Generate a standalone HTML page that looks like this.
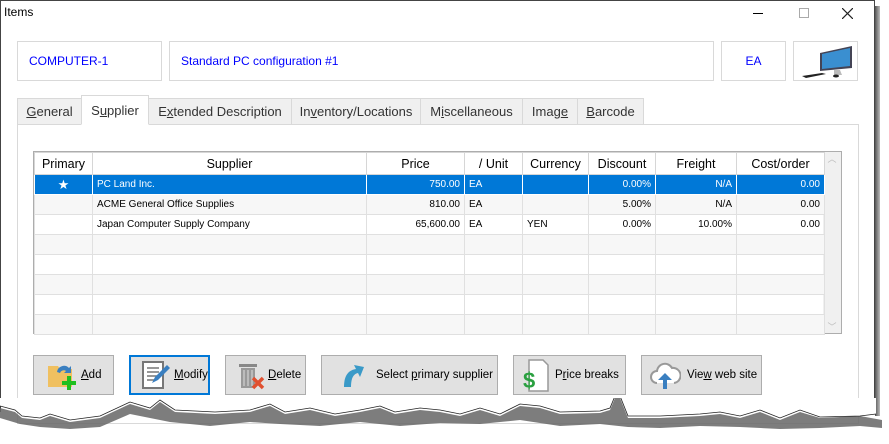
<!DOCTYPE html>
<html><head><style>
*{box-sizing:border-box;margin:0;padding:0}
body{width:889px;height:444px;background:#fff;position:relative;overflow:hidden;font-family:"Liberation Sans",Arial,sans-serif;font-size:12px;color:#000}
.a{position:absolute}
.box{position:absolute;border:1px solid #d9d9d9;background:#fff;color:#0000ff;font-size:12px;display:flex;align-items:center}
.tab{position:absolute;top:98px;height:27px;border:1px solid #d9d9d9;background:#f0f0f0;color:#333;font-size:13px;display:flex;align-items:center;justify-content:center}
table{border-collapse:collapse;position:absolute;left:33px;top:151px;table-layout:fixed}
td,th{height:20px;border:1px solid #e0e0e0;font-size:10px;padding:0 4px;white-space:nowrap;overflow:hidden}
th{font-weight:normal;font-size:12.5px;height:22px;border-color:#d6d6d6;background:#fff}
tr.sel td{background:#0078d7;color:#fff;border-color:#fff}
tr.g td{background:#f7f7f7}
.r{text-align:right}.c{text-align:center}
.btn{position:absolute;top:355px;height:40px;background:#e1e1e1;border:1px solid #adadad;font-size:11.5px;display:flex;align-items:center}
u{text-decoration:underline}
</style></head><body>
<div class="a" style="left:0;top:0;width:875px;height:412px;border:1px solid #444;border-bottom:none;background:#fff"></div>
<div class="a" style="left:875px;top:6px;width:5px;height:410px;background:linear-gradient(90deg,#555,#bbb)"></div>
<div class="a" style="left:4px;top:5px;font-size:12px">Items</div>
<div class="a" style="left:753px;top:13px;width:10px;height:1px;background:#000"></div>
<div class="a" style="left:799px;top:8px;width:10px;height:10px;border:1px solid #aaa"></div>
<svg class="a" style="left:842px;top:8px" width="11" height="11"><path d="M0 0L11 11M11 0L0 11" stroke="#222" stroke-width="1.2"/></svg>

<div class="box" style="left:17px;top:41px;width:145px;height:40px;padding-left:11px">COMPUTER-1</div>
<div class="box" style="left:169px;top:41px;width:545px;height:40px;padding-left:11px">Standard PC configuration #1</div>
<div class="box" style="left:721px;top:41px;width:65px;height:40px;justify-content:center">EA</div>
<div class="box" style="left:793px;top:41px;width:65px;height:40px;justify-content:center">
<svg width="56" height="36" viewBox="0 0 56 36"><polygon points="22,10 54,3 54,25 22,28" fill="#445"/><polygon points="24,11 52,5 52,23 24,26" fill="#3a8fd0"/><polygon points="36,27 42,27 44,32 36,32" fill="#bbb"/><polygon points="4,33 24,30 28,31 8,35" fill="#222"/><ellipse cx="38" cy="33" rx="3" ry="1.5" fill="#222"/></svg></div>

<div class="a" style="left:17px;top:124px;width:842px;height:300px;border:1px solid #d9d9d9;background:#fff"></div>
<div class="tab" style="left:17px;width:65px"><span><u>G</u>eneral</span></div>
<div class="tab" style="left:81px;top:95px;height:30px;width:68px;background:#fff;border-bottom-color:#fff;z-index:2"><span>S<u>u</u>pplier</span></div>
<div class="tab" style="left:148px;width:144px"><span>E<u>x</u>tended Description</span></div>
<div class="tab" style="left:291px;width:130px"><span>In<u>v</u>entory/Locations</span></div>
<div class="tab" style="left:420px;width:103px"><span>M<u>i</u>scellaneous</span></div>
<div class="tab" style="left:522px;width:56px"><span>Imag<u>e</u></span></div>
<div class="tab" style="left:577px;width:67px"><span><u>B</u>arcode</span></div>

<div class="a" style="left:33px;top:151px;width:809px;height:183px;border:1px solid #adadad;background:#fff"></div>
<div class="a" style="left:823px;top:152px;width:18px;height:181px;background:#f0f0f0;color:#bbb;font-size:9px;text-align:center">︿<div style="position:absolute;bottom:0;width:18px">﹀</div></div>
<table style="width:790px;left:34px;top:152px">
<colgroup><col width="58"><col width="274"><col width="98"><col width="58"><col width="66"><col width="67"><col width="81"><col width="88"></colgroup>
<tr><th>Primary</th><th>Supplier</th><th>Price</th><th>/ Unit</th><th>Currency</th><th>Discount</th><th>Freight</th><th>Cost/order</th></tr>
<tr class="sel"><td class="c" style="font-size:13px">★</td><td>PC Land Inc.</td><td class="r">750.00</td><td>EA</td><td></td><td class="r">0.00%</td><td class="r">N/A</td><td class="r">0.00</td></tr>
<tr class="g"><td></td><td>ACME General Office Supplies</td><td class="r">810.00</td><td>EA</td><td></td><td class="r">5.00%</td><td class="r">N/A</td><td class="r">0.00</td></tr>
<tr><td></td><td>Japan Computer Supply Company</td><td class="r">65,600.00</td><td>EA</td><td>YEN</td><td class="r">0.00%</td><td class="r">10.00%</td><td class="r">0.00</td></tr>
<tr class="g"><td></td><td></td><td></td><td></td><td></td><td></td><td></td><td></td></tr>
<tr><td></td><td></td><td></td><td></td><td></td><td></td><td></td><td></td></tr>
<tr class="g"><td></td><td></td><td></td><td></td><td></td><td></td><td></td><td></td></tr>
<tr><td></td><td></td><td></td><td></td><td></td><td></td><td></td><td></td></tr>
<tr class="g"><td></td><td></td><td></td><td></td><td></td><td></td><td></td><td></td></tr>
</table>

<div class="btn" style="left:33px;width:81px"><svg width="34" height="34" style="margin:0 2px 0 11px" viewBox="0 0 34 34"><path d="M3 8h10l2 3h12v18H3z" fill="#f0c060"/><path d="M12 14a7 7 0 0 1 12-4l2-2v7h-7l2-2a4 4 0 0 0-6 2z" fill="#3a7fc0"/><path d="M22 18h4v5h5v4h-5v5h-4v-5h-5v-4h5z" fill="#1fbf1f"/></svg><span><u>A</u>dd</span></div>
<div class="btn" style="left:129px;width:81px;border:2px solid #0078d7"><svg width="32" height="32" style="margin:0 2px 0 9px" viewBox="0 0 32 32"><rect x="3" y="3" width="20" height="26" fill="#fff" stroke="#777" stroke-width="2"/><path d="M7 9h12M7 13h12M7 17h10M7 21h8" stroke="#777" stroke-width="1.5"/><path d="M12 24l3-6 12-12 3 3-12 12z" fill="#3a7fc0"/></svg><span><u>M</u>odify</span></div>
<div class="btn" style="left:225px;width:81px"><svg width="30" height="32" style="margin:0 2px 0 10px" viewBox="0 0 30 32"><rect x="3" y="5" width="18" height="3" fill="#888"/><rect x="5" y="9" width="14" height="20" fill="#999"/><path d="M8 11v16M12 11v16M16 11v16" stroke="#ddd"/><path d="M17 19l10 10M27 19l-10 10" stroke="#e05030" stroke-width="3.5"/></svg><span><u>D</u>elete</span></div>
<div class="btn" style="left:321px;width:177px"><svg width="26" height="28" style="margin:0 10px 0 18px" viewBox="0 0 26 28"><path d="M4 26c0-12 5-17 12-18l-2-4 10 2-4 10-2-4c-5 1-7 6-7 14z" fill="#3a9ac8"/></svg><span>Select <u>p</u>rimary supplier</span></div>
<div class="btn" style="left:513px;width:113px"><svg width="26" height="34" style="margin:0 6px 0 9px" viewBox="0 0 26 34"><path d="M6 2h14l5 5v26H6z" fill="#fff" stroke="#999" stroke-width="1.5"/><text x="0" y="30" font-family="Liberation Sans" font-weight="bold" font-size="22" fill="#2aa040">$</text></svg><span>P<u>r</u>ice breaks</span></div>
<div class="btn" style="left:641px;width:121px"><svg width="32" height="32" style="margin:0 6px 0 7px" viewBox="0 0 32 32"><path d="M8 24a6 6 0 0 1 0-12 8 8 0 0 1 15-3 6 6 0 0 1 2 15" fill="#fff" stroke="#999" stroke-width="2"/><path d="M16 14l-7 7h5v9h4v-9h5z" fill="#3a7fc0"/></svg><span>Vie<u>w</u> web site</span></div>

<svg class="a" style="left:0;top:398px" width="889" height="46" viewBox="0 0 889 46">
<path d="M0 10 L15 14 L22 20 L40 22 L50 18 L70 24 L100 20 L130 6 L150 12 L160 4 L175 14 L215 16 L250 14 L270 8 L285 16 L310 12 L335 18 L360 14 L380 10 L395 16 L420 12 L440 14 L460 18 L480 12 L500 18 L520 8 L540 10 L560 16 L600 15 L610 12 L615 0 L620 0 L628 20 L660 20 L700 18 L720 16 L740 20 L760 14 L780 22 L800 14 L820 20 L860 18 L882 22 L882 30 L860 28 L820 30 L780 31 L740 29 L700 28 L660 30 L628 29 L600 26 L560 28 L520 22 L480 26 L440 25 L400 28 L360 24 L320 28 L280 26 L250 24 L210 28 L170 24 L150 20 L130 16 L100 29 L70 31 L40 29 L20 26 L0 20Z" fill="#666" opacity="0.85"/>
<path d="M-2 -5 L876 -5 L876 16 L860 18 L820 19 L800 12 L780 20 L760 12 L740 18 L720 14 L700 16 L660 18 L628 18 L620 -2 L615 -2 L610 10 L600 13 L560 14 L540 8 L520 6 L500 16 L480 10 L460 16 L440 12 L420 10 L395 14 L380 8 L360 12 L335 16 L310 10 L285 14 L270 6 L250 12 L215 14 L175 12 L160 2 L150 10 L130 4 L100 18 L70 22 L50 16 L40 20 L22 18 L15 12 L0 8Z" fill="#fff"/>
<path d="M876 16 L860 18 L820 19 L800 12 L780 20 L760 12 L740 18 L720 14 L700 16 L660 18 L628 18 L620 -2 L615 -2 L610 10 L600 13 L560 14 L540 8 L520 6 L500 16 L480 10 L460 16 L440 12 L420 10 L395 14 L380 8 L360 12 L335 16 L310 10 L285 14 L270 6 L250 12 L215 14 L175 12 L160 2 L150 10 L130 4 L100 18 L70 22 L50 16 L40 20 L22 18 L15 12 L0 8" fill="none" stroke="#222" stroke-width="0.8"/>
</svg>
</body></html>
